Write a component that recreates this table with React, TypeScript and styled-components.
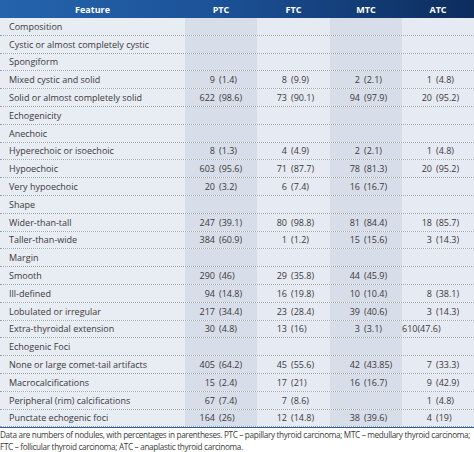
import React from 'react';
import styled, { createGlobalStyle } from 'styled-components';

const GlobalStyle = createGlobalStyle`
  html, body {
    margin: 0;
    padding: 0;
    background: #ffffff;
  }
  body {
    font-family: "Open Sans", "Noto Sans", sans-serif;
  }
`;

type Cell = [string, string] | null | string;

interface Row {
  label: string;
  values?: Cell[];
}

const rows: Row[] = [
  { label: 'Composition' },
  { label: 'Cystic or almost completely cystic' },
  { label: 'Spongiform' },
  { label: 'Mixed cystic and solid', values: [['9', '(1.4)'], ['8', '(9.9)'], ['2', '(2.1)'], ['1', '(4.8)']] },
  { label: 'Solid or almost completely solid', values: [['622', '(98.6)'], ['73', '(90.1)'], ['94', '(97.9)'], ['20', '(95.2)']] },
  { label: 'Echogenicity' },
  { label: 'Anechoic' },
  { label: 'Hyperechoic or isoechoic', values: [['8', '(1.3)'], ['4', '(4.9)'], ['2', '(2.1)'], ['1', '(4.8)']] },
  { label: 'Hypoechoic', values: [['603', '(95.6)'], ['71', '(87.7)'], ['78', '(81.3)'], ['20', '(95.2)']] },
  { label: 'Very hypoechoic', values: [['20', '(3.2)'], ['6', '(7.4)'], ['16', '(16.7)'], null] },
  { label: 'Shape' },
  { label: 'Wider-than-tall', values: [['247', '(39.1)'], ['80', '(98.8)'], ['81', '(84.4)'], ['18', '(85.7)']] },
  { label: 'Taller-than-wide', values: [['384', '(60.9)'], ['1', '(1.2)'], ['15', '(15.6)'], ['3', '(14.3)']] },
  { label: 'Margin' },
  { label: 'Smooth', values: [['290', '(46)'], ['29', '(35.8)'], ['44', '(45.9)'], null] },
  { label: 'Ill-defined', values: [['94', '(14.8)'], ['16', '(19.8)'], ['10', '(10.4)'], ['8', '(38.1)']] },
  { label: 'Lobulated or irregular', values: [['217', '(34.4)'], ['23', '(28.4)'], ['39', '(40.6)'], ['3', '(14.3)']] },
  { label: 'Extra-thyroidal extension', values: [['30', '(4.8)'], ['13', '(16)'], ['3', '(3.1)'], '610(47.6)'] },
  { label: 'Echogenic Foci' },
  { label: 'None or large comet-tail artifacts', values: [['405', '(64.2)'], ['45', '(55.6)'], ['42', '(43.85)'], ['7', '(33.3)']] },
  { label: 'Macrocalcifications', values: [['15', '(2.4)'], ['17', '(21)'], ['16', '(16.7)'], ['9', '(42.9)']] },
  { label: 'Peripheral (rim) calcifications', values: [['67', '(7.4)'], ['7', '(8.6)'], null, ['1', '(4.8)']] },
  { label: 'Punctate echogenic foci', values: [['164', '(26)'], ['12', '(14.8)'], ['38', '(39.6)'], ['4', '(19)']] },
];

const columns = ['PTC', 'FTC', 'MTC', 'ATC'];
const colBg = ['#d7dde9', '#e6eaf2', '#d7dde9', '#e6eaf2'];

const Table = styled.div`
  width: 474px;
  display: flex;
  flex-direction: column;
  font-size: 9px;
  color: #3a3a3a;
`;

const Grid = styled.div`
  display: grid;
  grid-template-columns: 185px 72px 73px 72px 72px;
`;

const HeadRow = styled(Grid)`
  height: 18px;
  background: linear-gradient(90deg, #2464ad 0%, #1c5298 45%, #0c2c5c 100%);
  color: #ffffff;
  font-weight: 700;
`;

const HeadCell = styled.div`
  display: flex;
  align-items: center;
  justify-content: center;
`;

const BodyRow = styled(Grid)`
  height: 17.8px;
  box-sizing: border-box;
  border-bottom: 1px dotted #9aa2b0;
  &:last-child {
    border-bottom: none;
  }
`;

const LabelCell = styled.div`
  display: flex;
  align-items: center;
  padding-left: 9px;
  background: #e8ecf3;
  white-space: nowrap;
`;

const ValueCell = styled.div<{ $bg: string }>`
  display: grid;
  grid-template-columns: 30px 1fr;
  column-gap: 4px;
  align-items: center;
  background: ${(p) => p.$bg};
  white-space: nowrap;
`;

const Count = styled.span`
  text-align: right;
`;

const Pct = styled.span`
  text-align: left;
`;

const Raw = styled.span`
  grid-column: 1 / span 2;
`;

const Footer = styled.div`
  border-top: 1.5px solid #2a5ea3;
  padding-top: 1px;
  font-size: 8.2px;
  line-height: 12px;
  color: #3a3a3a;
  white-space: nowrap;
  overflow: hidden;
`;

const FooterLine = styled.div`
  letter-spacing: -0.33px;
`;

function renderCell(cell: Cell) {
  if (cell === null) return null;
  if (typeof cell === 'string') return <Raw>{cell}</Raw>;
  return (
    <>
      <Count>{cell[0]}</Count>
      <Pct>{cell[1]}</Pct>
    </>
  );
}

export default function App() {
  return (
    <>
      <GlobalStyle />
      <Table>
        <HeadRow>
          <HeadCell>Feature</HeadCell>
          {columns.map((c) => (
            <HeadCell key={c}>{c}</HeadCell>
          ))}
        </HeadRow>
        {rows.map((r) => (
          <BodyRow key={r.label}>
            <LabelCell>{r.label}</LabelCell>
            {colBg.map((bg, i) => (
              <ValueCell key={i} $bg={bg}>
                {r.values ? renderCell(r.values[i]) : null}
              </ValueCell>
            ))}
          </BodyRow>
        ))}
        <Footer>
          <FooterLine>
            Data are numbers of nodules, with percentages in parentheses. PTC – papillary thyroid carcinoma; MTC – medullary thyroid carcinoma;
          </FooterLine>
          <FooterLine>FTC – follicular thyroid carcinoma; ATC – anaplastic thyroid carcinoma.</FooterLine>
        </Footer>
      </Table>
    </>
  );
}
